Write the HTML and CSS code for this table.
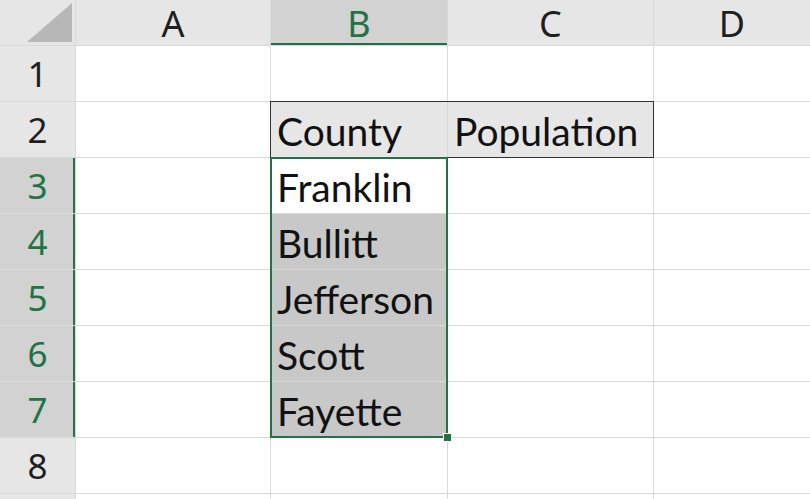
FILE: index.html
```html
<!DOCTYPE html>
<html>
<head>
<meta charset="utf-8">
<link rel="stylesheet" href="styles.css">
</head>
<body>
<div class="sheet">
  <div class="corner"><div class="tri"></div></div>
  <div class="colhead">A</div>
  <div class="colhead sel">B</div>
  <div class="colhead">C</div>
  <div class="colhead">D</div>

  <div class="rowhead">1</div>
  <div class="cell"></div><div class="cell"></div><div class="cell"></div><div class="cell"></div>

  <div class="rowhead">2</div>
  <div class="cell"></div><div class="cell hdr">County</div><div class="cell hdr">Population</div><div class="cell"></div>

  <div class="rowhead sel">3</div>
  <div class="cell"></div><div class="cell">Franklin</div><div class="cell"></div><div class="cell"></div>

  <div class="rowhead sel">4</div>
  <div class="cell"></div><div class="cell shade">Bullitt</div><div class="cell"></div><div class="cell"></div>

  <div class="rowhead sel">5</div>
  <div class="cell"></div><div class="cell shade">Jefferson</div><div class="cell"></div><div class="cell"></div>

  <div class="rowhead sel">6</div>
  <div class="cell"></div><div class="cell shade">Scott</div><div class="cell"></div><div class="cell"></div>

  <div class="rowhead sel">7</div>
  <div class="cell"></div><div class="cell shade">Fayette</div><div class="cell"></div><div class="cell"></div>

  <div class="rowhead">8</div>
  <div class="cell"></div><div class="cell"></div><div class="cell"></div><div class="cell"></div>

  <div class="rowhead"></div>
  <div class="cell"></div><div class="cell"></div><div class="cell"></div><div class="cell"></div>

  <div class="hdrbox"></div>
  <div class="selbox"><div class="handle"></div></div>
</div>
</body>
</html>
```

FILE: styles.css
```css
html, body {
  margin: 0;
  padding: 0;
  background: #ffffff;
  overflow: hidden;
}

.sheet {
  position: relative;
  display: grid;
  grid-template-columns: 75px 194px 176px 205px 1fr;
  grid-template-rows: 45px repeat(8, 55px) 40px;
  gap: 1px;
  background: #d9d9d9;
  width: 810px;
  height: 499px;
  overflow: hidden;
}

.corner {
  background: #e6e6e6;
  display: flex;
  align-items: flex-end;
  justify-content: flex-end;
  padding: 0 3px 3px 0;
}

.tri {
  width: 45px;
  height: 39px;
  background: #b7b7b7;
  clip-path: polygon(100% 0, 100% 100%, 0 100%);
}

.colhead {
  background: #e6e6e6;
  font-family: "Noto Sans", "Open Sans", sans-serif;
  font-size: 36px;
  color: #1e1e1e;
  display: flex;
  align-items: center;
  justify-content: center;
  padding-top: 1px;
}

.colhead.sel {
  background: #d2d2d2;
  color: #217346;
  box-shadow: inset 0 -2px 0 #217346;
}

.rowhead {
  background: #e6e6e6;
  font-family: "Noto Sans", "Open Sans", sans-serif;
  font-size: 35px;
  color: #1e1e1e;
  display: flex;
  align-items: center;
  justify-content: center;
}

.rowhead.sel {
  background: #d2d2d2;
  color: #217346;
  box-shadow: inset -2px 0 0 #217346;
}

.cell {
  background: #ffffff;
  font-family: "Lato", "Open Sans", sans-serif;
  font-size: 39px;
  color: #111111;
  display: flex;
  align-items: flex-end;
  padding: 0 0 3px 6px;
  white-space: nowrap;
}

.cell.hdr {
  background: #e7e6e6;
}

.cell.shade {
  background: #c8c8c8;
}

.hdrbox {
  position: absolute;
  grid-column: 3 / 5;
  grid-row: 3 / 4;
  inset: -1px;
  border: 1.5px solid #333333;
  pointer-events: none;
}

.selbox {
  position: absolute;
  grid-column: 3 / 4;
  grid-row: 4 / 9;
  inset: -1px;
  border: 2px solid #217346;
  pointer-events: none;
}

.handle {
  position: absolute;
  right: -6px;
  bottom: -6px;
  width: 7px;
  height: 7px;
  background: #217346;
  border: 1px solid #ffffff;
}
```
